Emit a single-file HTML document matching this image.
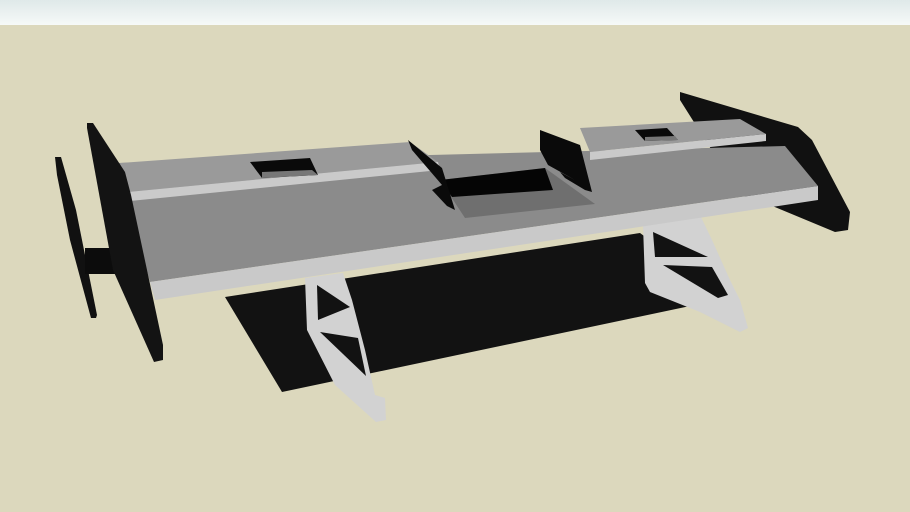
<!DOCTYPE html>
<html><head><style>
html,body{margin:0;padding:0;width:910px;height:512px;overflow:hidden;background:#dcd8bd}
svg{display:block}
</style></head><body>
<svg width="910" height="512" viewBox="0 0 910 512" xmlns="http://www.w3.org/2000/svg">
<defs>
<linearGradient id="sky" x1="0" y1="0" x2="0" y2="1"><stop offset="0" stop-color="#dfe9e9"/><stop offset="1" stop-color="#f6f9f8"/></linearGradient>
</defs>
<rect x="0" y="0" width="910" height="25" fill="url(#sky)"/>
<rect x="0" y="25" width="910" height="487" fill="#dcd8bd"/>
<!-- right endplate -->
<polygon points="680,92 798,127 812,140 850,212 848,230 835,232 770,205 740,195 680,100" fill="#111"/>
<!-- lower wing -->
<polygon points="225,297 640,233 728,298 282,392" fill="#121212"/>
<!-- right leg -->
<polygon points="643,225 700,215 712,240 730,280 740,300 748,328 740,332 700,312 650,292 645,283" fill="#d2d2d2"/>
<polygon points="653,232 708,257 655,257" fill="#121212"/>
<polygon points="663,265 712,267 728,295 718,298" fill="#121212"/>
<!-- main top face -->
<polygon points="117,163 785,146 818,186 150,282" fill="#8b8b8b"/>
<!-- main front face -->
<polygon points="150,282 818,186 818,200 155,300" fill="#c9c9c9"/>
<!-- center hole -->
<polygon points="440,180 545,168 595,204 465,218" fill="#6f6f6f"/>
<polygon points="440,180 545,168 553,190 452,197" fill="#050505"/>
<!-- upper left plate -->
<polygon points="120,163 410,142 438,162 128,192" fill="#9a9a9a"/>
<polygon points="128,192 438,162 440,170 130,201" fill="#cacaca"/>
<polygon points="250,162 310,158 318,175 262,178" fill="#0a0a0a"/>
<polygon points="262,172 312,170 318,175 262,178" fill="#777"/>
<!-- upper right plate -->
<polygon points="580,128 740,119 766,134 590,152" fill="#9a9a9a"/>
<polygon points="590,152 766,134 766,141 590,160" fill="#cacaca"/>
<polygon points="635,130 667,128 678,140 645,141" fill="#0a0a0a"/>
<polygon points="645,137 675,136 678,140 645,141" fill="#777"/>
<!-- fins -->
<polygon points="408,140 442,168 455,210 447,206 432,190 442,185 412,150" fill="#0a0a0a"/>
<polygon points="540,130 580,145 592,192 585,190 565,178 560,172 575,180 548,165 540,150" fill="#0a0a0a"/>
<!-- left leg -->
<polygon points="305,278 343,273 352,300 365,350 375,395 385,398 386,420 376,422 335,385 307,330" fill="#d2d2d2"/>
<polygon points="317,285 350,307 318,320" fill="#121212"/>
<polygon points="320,332 358,338 366,376" fill="#121212"/>
<!-- left endplates -->
<polygon points="55,157 61,157 76,210 97,315 96,318 91,318 70,240 57,175" fill="#111"/>
<rect x="85" y="248" width="42" height="26" fill="#0c0c0c"/>
<polygon points="87,123 93,123 125,172 131,195 163,345 163,360 154,362 113,270 87,128" fill="#131313"/>
</svg>
</body></html>
